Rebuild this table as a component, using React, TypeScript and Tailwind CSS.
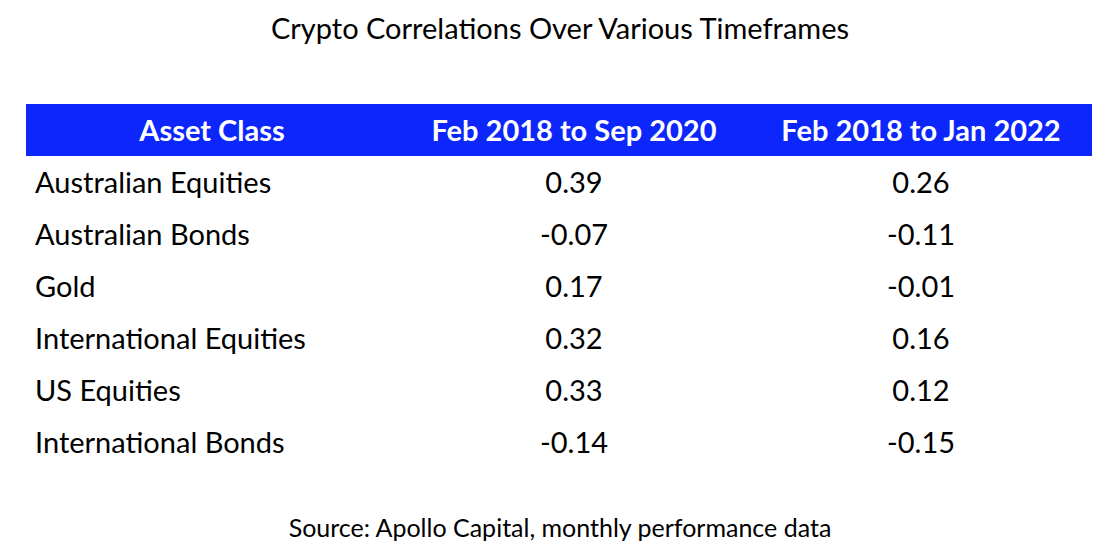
const rows: [string, string, string][] = [
  ['Australian Equities', '0.39', '0.26'],
  ['Australian Bonds', '-0.07', '-0.11'],
  ['Gold', '0.17', '-0.01'],
  ['International Equities', '0.32', '0.16'],
  ['US Equities', '0.33', '0.12'],
  ['International Bonds', '-0.14', '-0.15'],
];

export default function App() {
  return (
    <div className="flex h-[560px] w-[1120px] flex-col bg-white font-['Lato','Noto_Sans',sans-serif] text-black">
      <div className="flex h-[56px] items-center justify-center text-[29px]">
        Crypto Correlations Over Various Timeframes
      </div>

      <div className="ml-[26px] mt-[48px] w-[1066px]">
        <div className="grid h-[52px] grid-cols-[372px_352px_342px] items-center bg-[#0d26fc] text-[29px] font-bold text-white">
          <div className="text-center">Asset Class</div>
          <div className="text-center">Feb 2018 to Sep 2020</div>
          <div className="text-center">Feb 2018 to Jan 2022</div>
        </div>
        {rows.map(([name, a, b]) => (
          <div key={name} className="grid h-[52px] grid-cols-[372px_352px_342px] items-center text-[29px]">
            <div className="pl-[9px]">{name}</div>
            <div className="text-center">{a}</div>
            <div className="text-center">{b}</div>
          </div>
        ))}
      </div>

      <div className="mt-[46px] flex h-[28px] items-center justify-center text-[25px]">
        Source: Apollo Capital, monthly performance data
      </div>
    </div>
  );
}
